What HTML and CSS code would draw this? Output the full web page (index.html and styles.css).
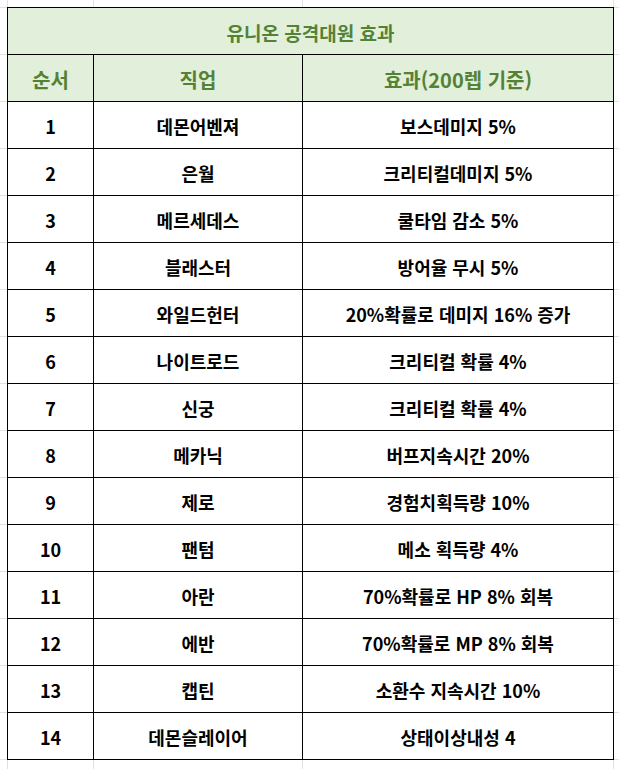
FILE: index.html
```html
<!DOCTYPE html>
<html lang="ko">
<head>
<meta charset="utf-8">
<title>유니온 공격대원 효과</title>
<link rel="stylesheet" href="styles.css">
</head>
<body>
<div class="sheet">
  <div class="cell title">유니온 공격대원 효과</div>
  <div class="cell head">순서</div>
  <div class="cell head">직업</div>
  <div class="cell head">효과(200렙 기준)</div>

  <div class="cell">1</div><div class="cell">데몬어벤져</div><div class="cell">보스데미지 5%</div>
  <div class="cell">2</div><div class="cell">은월</div><div class="cell">크리티컬데미지 5%</div>
  <div class="cell">3</div><div class="cell">메르세데스</div><div class="cell">쿨타임 감소 5%</div>
  <div class="cell">4</div><div class="cell">블래스터</div><div class="cell">방어율 무시 5%</div>
  <div class="cell">5</div><div class="cell">와일드헌터</div><div class="cell">20%확률로 데미지 16% 증가</div>
  <div class="cell">6</div><div class="cell">나이트로드</div><div class="cell">크리티컬 확률 4%</div>
  <div class="cell">7</div><div class="cell">신궁</div><div class="cell">크리티컬 확률 4%</div>
  <div class="cell">8</div><div class="cell">메카닉</div><div class="cell">버프지속시간 20%</div>
  <div class="cell">9</div><div class="cell">제로</div><div class="cell">경험치획득량 10%</div>
  <div class="cell">10</div><div class="cell">팬텀</div><div class="cell">메소 획득량 4%</div>
  <div class="cell">11</div><div class="cell">아란</div><div class="cell">70%확률로 HP 8% 회복</div>
  <div class="cell">12</div><div class="cell">에반</div><div class="cell">70%확률로 MP 8% 회복</div>
  <div class="cell">13</div><div class="cell">캡틴</div><div class="cell">소환수 지속시간 10%</div>
  <div class="cell">14</div><div class="cell">데몬슬레이어</div><div class="cell">상태이상내성 4</div>
</div>
</body>
</html>
```

FILE: styles.css
```css
html, body {
  margin: 0;
  padding: 0;
}
body {
  width: 619px;
  height: 769px;
  overflow: hidden;
  background-color: #fff;
  background-image:
    linear-gradient(#e0e0e0, #e0e0e0),
    linear-gradient(#e0e0e0, #e0e0e0),
    linear-gradient(#e0e0e0, #e0e0e0),
    linear-gradient(#e0e0e0, #e0e0e0),
    linear-gradient(to bottom, #e0e0e0 1px, transparent 1px);
  background-size: 1px 100%, 1px 100%, 1px 100%, 1px 100%, 100% 47px;
  background-position: 7px 0, 93px 0, 302px 0, 613px 0, 0 7px;
  background-repeat: no-repeat, no-repeat, no-repeat, no-repeat, repeat;
  font-family: "Noto Sans CJK KR", "Noto Sans", sans-serif;
}
.sheet {
  margin: 7px 0 0 7px;
  width: 607px;
  display: grid;
  grid-template-columns: 86px 209px 311px;
  grid-auto-rows: 47px;
  border-left: 1px solid #000;
  border-top: 1px solid #000;
  box-sizing: border-box;
  background: #fff;
}
.cell {
  box-sizing: border-box;
  border-right: 1px solid #000;
  border-bottom: 1px solid #000;
  display: flex;
  align-items: center;
  justify-content: center;
  font-size: 18px;
  font-weight: 700;
  color: #000;
  white-space: nowrap;
  padding-top: 2px;
}
.title {
  grid-column: 1 / -1;
  background: #e2efda;
  color: #548235;
  font-size: 19px;
}
.head {
  background: #e2efda;
  color: #548235;
  font-size: 20px;
}
```
